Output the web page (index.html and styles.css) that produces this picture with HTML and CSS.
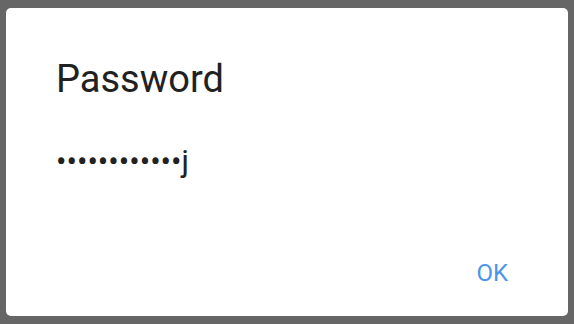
FILE: index.html
```html
<!DOCTYPE html>
<html>
<head>
<meta charset="utf-8">
<link rel="stylesheet" href="styles.css">
</head>
<body>
<div class="dialog">
  <div class="title">Password</div>
  <div class="value">••••••••••••j</div>
  <div class="actions"><span class="btn">OK</span></div>
</div>
</body>
</html>
```
FILE: styles.css
```css
html, body {
  margin: 0;
  padding: 0;
  background: #666666;
  width: 574px;
  height: 324px;
  overflow: hidden;
}
.dialog {
  margin: 8px 6px;
  height: 308px;
  background: #ffffff;
  border-radius: 5px;
  display: flex;
  flex-direction: column;
  font-family: Roboto, "Noto Sans", sans-serif;
  box-sizing: border-box;
  padding: 0 0 0 50px;
}
.title {
  font-size: 38px;
  color: #212121;
  line-height: 44px;
  margin-top: 49px;
}
.value {
  font-size: 31px;
  color: #212121;
  line-height: 36px;
  margin-top: 43px;
}
.actions {
  margin-top: auto;
  margin-bottom: 29px;
  display: flex;
  justify-content: flex-end;
  padding-right: 60px;
}
.btn {
  font-size: 24px;
  color: #4a96e8;
  line-height: 28px;
}
```
